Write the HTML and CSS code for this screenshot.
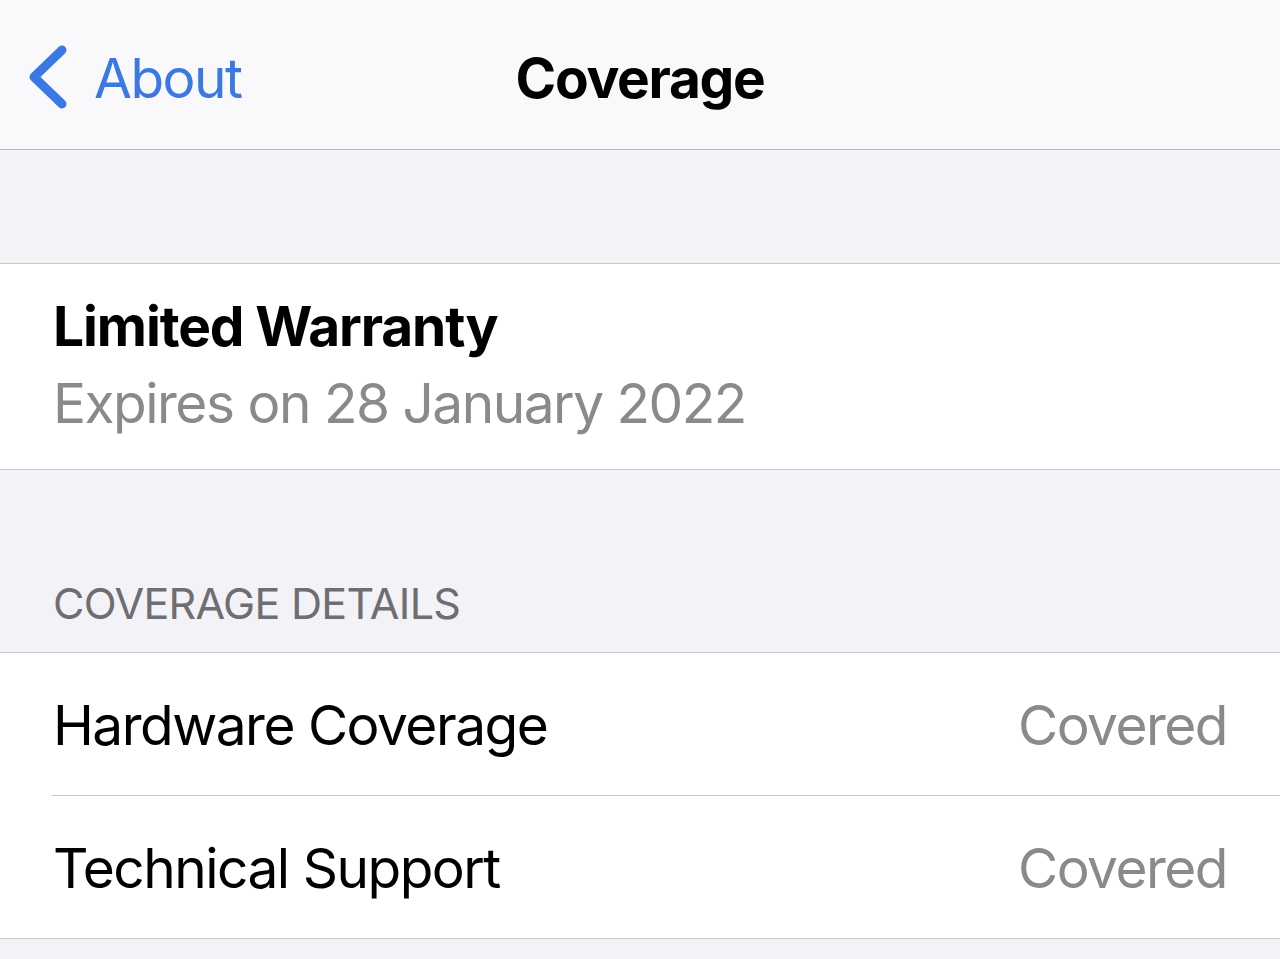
FILE: index.html
```html
<!DOCTYPE html>
<html lang="en">
<head>
<meta charset="utf-8">
<title>Coverage</title>
<link rel="stylesheet" href="styles.css">
</head>
<body>
<div class="screen">
  <header class="nav">
    <a class="back" href="#">
      <svg class="chev" width="40" height="64" viewBox="0 0 40 64" aria-hidden="true">
        <polyline points="33,5 5,32 33,59" fill="none" stroke="currentColor" stroke-width="9" stroke-linecap="round" stroke-linejoin="round"/>
      </svg>
      <span class="back-label">About</span>
    </a>
    <h1 class="title">Coverage</h1>
  </header>

  <div class="gap-top"></div>

  <section class="group">
    <div class="cell warranty">
      <div class="cell-title">Limited Warranty</div>
      <div class="cell-sub">Expires on 28 January 2022</div>
    </div>
  </section>

  <div class="section-header">COVERAGE DETAILS</div>

  <section class="group">
    <div class="row">
      <span class="row-label">Hardware Coverage</span>
      <span class="row-value">Covered</span>
    </div>
    <div class="row">
      <span class="row-label">Technical Support</span>
      <span class="row-value">Covered</span>
    </div>
  </section>
</div>
</body>
</html>
```

FILE: styles.css
```css
html, body {
  margin: 0;
  padding: 0;
  background: #f2f2f7;
}

body {
  font-family: Inter, "Noto Sans", "Liberation Sans", sans-serif;
  color: #000;
  -webkit-font-smoothing: antialiased;
}

.screen {
  width: 1280px;
  height: 959px;
  overflow: hidden;
  display: flex;
  flex-direction: column;
}

.nav {
  height: 149px;
  flex: none;
  background: #f9f9fb;
  border-bottom: 1px solid #b9b9bd;
  display: flex;
  align-items: center;
  justify-content: center;
  position: relative;
}

.back {
  position: absolute;
  left: 29px;
  top: 0;
  height: 149px;
  display: flex;
  align-items: center;
  color: #3a78e4;
  text-decoration: none;
}

.chev {
  display: block;
  margin-top: 4px;
}

.back-label {
  font-size: 55px;
  line-height: 60px;
  margin-left: 25px;
  margin-top: 6px;
  letter-spacing: -1.5px;
}

.title {
  margin: 6px 0 0 0;
  font-size: 55px;
  line-height: 60px;
  font-weight: 700;
  letter-spacing: -1.3px;
}

.gap-top {
  height: 113px;
  flex: none;
}

.group {
  background: #fff;
  border-top: 1px solid #c8c8cc;
  border-bottom: 1px solid #c8c8cc;
  flex: none;
}

.warranty {
  height: 205px;
  box-sizing: border-box;
  padding: 24px 0 0 53px;
}

.cell-title {
  font-size: 55px;
  line-height: 77px;
  font-weight: 700;
  letter-spacing: -1.1px;
}

.cell-sub {
  font-size: 55px;
  line-height: 77px;
  color: #8a8a8e;
  letter-spacing: -1.5px;
}

.section-header {
  height: 182px;
  flex: none;
  box-sizing: border-box;
  padding: 0 0 24px 53px;
  display: flex;
  align-items: flex-end;
  font-size: 43px;
  line-height: 50px;
  color: #6d6d72;
  letter-spacing: -0.7px;
}

.row {
  height: 142px;
  display: flex;
  align-items: center;
  justify-content: space-between;
  padding: 0 53px;
  font-size: 55px;
  letter-spacing: -1.5px;
}

.row + .row {
  border-top: 1px solid #c8c8cc;
  margin-left: 52px;
  padding-left: 1px;
}

.row-label {
  line-height: 60px;
  margin-top: 2px;
}

.row-value {
  line-height: 60px;
  margin-top: 2px;
  color: #8a8a8e;
}
```
